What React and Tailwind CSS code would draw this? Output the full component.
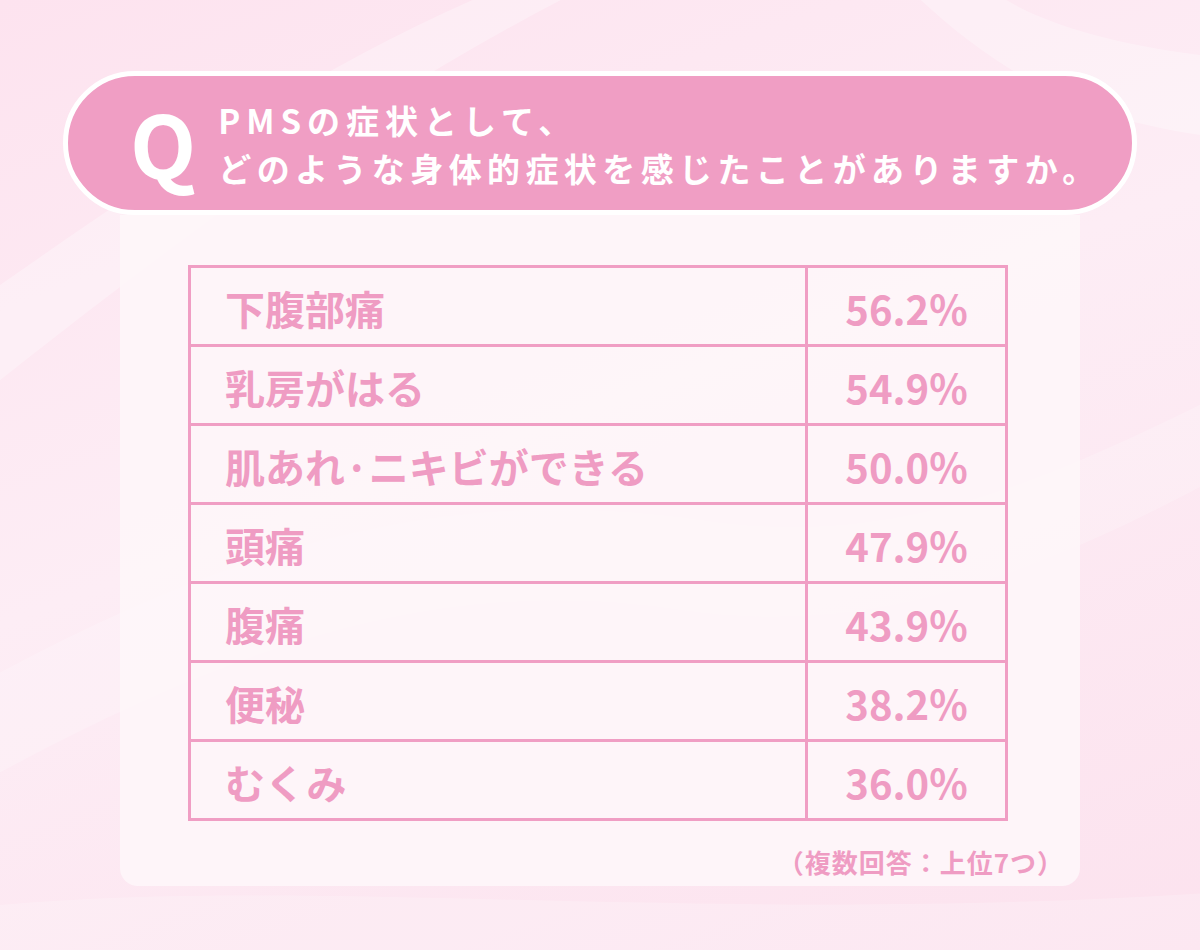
import React from 'react';

const rows = [
  { label: '下腹部痛', value: '56.2%' },
  { label: '乳房がはる', value: '54.9%' },
  { label: '肌あれ·ニキビができる', value: '50.0%' },
  { label: '頭痛', value: '47.9%' },
  { label: '腹痛', value: '43.9%' },
  { label: '便秘', value: '38.2%' },
  { label: 'むくみ', value: '36.0%' },
];

const font = { fontFamily: '"Noto Sans CJK JP", "Noto Sans", sans-serif' };

// soft white streaks in the background
const Waves = () => (
  <svg className="absolute inset-0" width="1200" height="950" viewBox="0 0 1200 950">
    <path d="M-50 320 C 150 180, 320 60, 520 -20 L 600 -20 C 380 90, 200 220, -50 420 Z" fill="#ffffff" opacity="0.3" />
    <path d="M-50 700 C 200 560, 420 480, 700 520 C 900 550, 1050 480, 1250 380 L 1250 460 C 1050 570, 880 640, 680 610 C 420 570, 200 660, -50 800 Z" fill="#ffffff" opacity="0.2" />
    <path d="M900 -20 C 1000 80, 1100 130, 1250 140 L 1250 60 C 1120 50, 1020 20, 980 -20 Z" fill="#ffffff" opacity="0.3" />
    <path d="M-50 910 C 300 870, 700 930, 1250 890 L 1250 960 L -50 960 Z" fill="#ffffff" opacity="0.2" />
  </svg>
);

const App = () => {
  return (
    <div
      className="relative w-[1200px] h-[950px] overflow-hidden bg-[linear-gradient(160deg,#fde3ef_0%,#fdedf5_45%,#fce2ee_100%)]"
      style={font}
    >
      <Waves />

      <div className="relative pt-[71px]">
        {/* Question banner */}
        <div className="mx-[63px] h-[144px] rounded-full border-[5px] border-white bg-[#f09ec4] flex items-center pl-[62px]">
          <span className="text-white font-bold text-[86px] leading-none mt-[-2px]">Q</span>
          <div className="ml-[22px] text-white font-bold text-[33px] leading-[48px] tracking-[5.4px] mt-[2px]">
            <p className="tracking-[6px]">PMSの症状として、</p>
            <p>どのような身体的症状を感じたことがありますか。</p>
          </div>
        </div>

        {/* Card */}
        <div className="mx-[120px] h-[671px] bg-[#fef6fa]/90 rounded-b-[18px] pt-[50px] pl-[68px] pr-[16px]">
          <div className="w-[820px] border-[3px] border-[#f09ec4]">
            {rows.map((row, i) => (
              <div
                key={row.label}
                className={`flex ${i > 0 ? 'h-[79px] border-t-[3px] border-[#f09ec4]' : 'h-[76px]'}`}
              >
                <div className="w-[614px] flex items-center pl-[34px] pt-[4px] text-[40px] font-bold text-[#ef9cc3]">
                  {row.label}
                </div>
                <div className="flex-1 border-l-[3px] border-[#f09ec4] flex items-center justify-center pt-[4px] text-[40px] font-bold text-[#ef9cc3]">
                  {row.value}
                </div>
              </div>
            ))}
          </div>
          <p className="mt-[28px] text-right text-[26px] font-bold tracking-[1px] text-[#ef9cc3] leading-none">
            （複数回答：上位7つ）
          </p>
        </div>
      </div>
    </div>
  );
};

export default App;
